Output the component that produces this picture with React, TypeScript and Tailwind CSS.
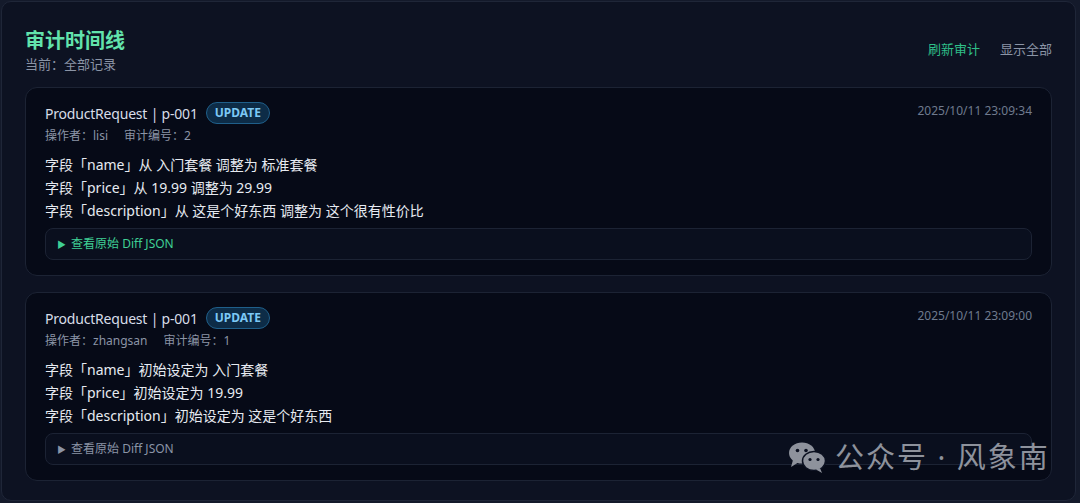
import React from "react";

interface AuditEntry {
  id: number;
  entity: string;
  operator: string;
  time: string;
  lines: React.ReactNode[];
  active: boolean;
}

const entries: AuditEntry[] = [
  {
    id: 2,
    entity: "ProductRequest | p-001",
    operator: "lisi",
    time: "2025/10/11 23:09:34",
    lines: [
      "字段「name」从 入门套餐 调整为 标准套餐",
      "字段「price」从 19.99 调整为 29.99",
      "字段「description」从 这是个好东西 调整为 这个很有性价比",
    ],
    active: true,
  },
  {
    id: 1,
    entity: "ProductRequest | p-001",
    operator: "zhangsan",
    time: "2025/10/11 23:09:00",
    lines: [
      "字段「name」初始设定为 入门套餐",
      "字段「price」初始设定为 19.99",
      "字段「description」初始设定为 这是个好东西",
    ],
    active: false,
  },
];

const WeChatIcon = () => (
  <svg width="40" height="34" viewBox="0 0 40 34" fill="currentColor">
    <ellipse cx="15" cy="13" rx="13" ry="10.5" />
    <path d="M6 20 L4 27 L12 22 Z" />
    <ellipse cx="27" cy="21" rx="11.5" ry="9.5" stroke="#0b1020" strokeWidth="1.5" />
    <path d="M33 28 L35 33 L29 29.5 Z" />
    <circle cx="10.5" cy="10.5" r="1.8" fill="#0b1020" />
    <circle cx="19" cy="10.5" r="1.8" fill="#0b1020" />
    <circle cx="23" cy="19.5" r="1.6" fill="#0b1020" />
    <circle cx="31" cy="19.5" r="1.6" fill="#0b1020" />
  </svg>
);

const AuditCard = ({ entry }: { entry: AuditEntry }) => {
  return (
    <div className="rounded-xl border border-[#1c2334] bg-[#060a17] px-[19px] pt-[14px] pb-[15px]">
      <div className="flex justify-between items-start">
        <div>
          <div className="flex items-center gap-2 h-[22px]">
            <span className="text-[14px] tracking-[-0.2px] text-[#d7dde8]">{entry.entity}</span>
            <span className="rounded-full border border-[#1f5f8a] bg-[#0d2c47] px-2 h-[22px] leading-[20px] text-[12px] font-bold text-[#7cc8f5]">
              UPDATE
            </span>
          </div>
          <div className="mt-[3px] flex gap-4 text-[12px] leading-[18px] text-[#8b94a6]">
            <span>操作者：{entry.operator}</span>
            <span>审计编号：{entry.id}</span>
          </div>
        </div>
        <div className="text-[12px] leading-[18px] text-[#6f7a8e]">{entry.time}</div>
      </div>
      <div className="mt-[8px] flex flex-col text-[14px] leading-[23px] text-[#e6eaf1]">
        {entry.lines.map((l, i) => (
          <div key={i}>{l}</div>
        ))}
      </div>
      <div className="mt-[6px] rounded-lg border border-[#1c2334] bg-[#0a0f1e] px-[11px] h-[32px] flex items-center">
        <span
          className={`text-[12px] ${entry.active ? "text-[#3fcf95]" : "text-[#8b94a6]"}`}
        >
          <span className="text-[9px] mr-[5px]">▶</span>查看原始 Diff JSON
        </span>
      </div>
    </div>
  );
};

export default function App() {
  return (
    <div
      className="relative min-h-[503px] bg-[#141a2b] p-[1px] pr-[4px]"
      style={{ fontFamily: '"Segoe UI", "Noto Sans", "Noto Sans CJK SC", sans-serif' }}
    >
      <div className="rounded-[10px] border border-[#1f2638] bg-[#0d1222] px-[23px] pt-[25px] pb-[19px]">
        <div className="flex justify-between items-center">
          <div>
            <div className="text-[20px] leading-[28px] font-bold text-[#62e3ac]">审计时间线</div>
            <div className="text-[13px] leading-[18px] text-[#8b94a6]">当前：全部记录</div>
          </div>
          <div className="flex gap-5 text-[13px]">
            <span className="text-[#2fbf88]">刷新审计</span>
            <span className="text-[#8b94a6]">显示全部</span>
          </div>
        </div>
        <div className="mt-[14px] flex flex-col gap-4">
          {entries.map((e) => (
            <AuditCard key={e.id} entry={e} />
          ))}
        </div>
      </div>
      <div className="absolute left-[787px] top-[440px] flex items-center gap-[8px] text-[#8e929c]">
        <WeChatIcon />
        <span className="text-[29px] leading-[34px] tracking-[2px]">公众号 · 风象南</span>
      </div>
    </div>
  );
}
